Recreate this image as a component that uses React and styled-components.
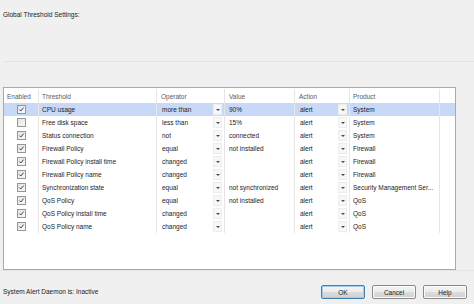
import React from "react";
import styled, { createGlobalStyle } from "styled-components";

const Global = createGlobalStyle`
  html, body { margin: 0; padding: 0; background: #f0f0f0; }
  body { font-family: "Liberation Sans", Arial, sans-serif; }
`;

const COLS = "35px 118px 68px 70px 55px 90px 1fr";

const Page = styled.div`
  width: 474px;
  height: 304px;
  background: #f0f0f0;
  display: flex;
  flex-direction: column;
  font-size: 6.5px;
  color: #1b1b1b;
  overflow: hidden;
`;

const Title = styled.div`
  height: 30px;
  line-height: 30px;
  padding-left: 3px;
`;

const Group = styled.div`
  margin-top: 31px;
  margin-left: 3px;
  padding-top: 25px;
  border-top: 1px solid #e3e3e3;
`;

const TableBox = styled.div`
  width: 451px;
  height: 181px;
  background: #ffffff;
  border: 1px solid #a9a9a9;
`;

const Row = styled.div`
  display: grid;
  grid-template-columns: ${COLS};
  height: ${(p) => (p.$header ? 15 : 13)}px;
  padding-top: ${(p) => (p.$header ? 1 : 0)}px;
  box-sizing: border-box;
  background: ${(p) => (p.$selected ? "#c7d9f7" : "#ffffff")};
  color: ${(p) => (p.$header ? "#5a5a5a" : "#1b1b1b")};
`;

const Cell = styled.div`
  display: flex;
  align-items: center;
  justify-content: ${(p) => (p.$center ? "center" : "flex-start")};
  padding-left: ${(p) => p.$pad ?? 3}px;
  border-right: ${(p) => (p.$last ? "none" : "1px solid #e6e6e6")};
  white-space: nowrap;
  overflow: hidden;
  min-width: 0;
`;

const CellText = styled.span`
  flex: 1;
  min-width: 0;
`;

const DropBtn = styled.span`
  flex: none;
  width: 9px;
  height: 11px;
  margin-right: 2px;
  display: flex;
  align-items: center;
  justify-content: center;
  background: #f7f7f7;
  border: 1px solid #ededed;
  box-sizing: border-box;
`;

const Arrow = styled.span`
  width: 0;
  height: 0;
  border-left: 2px solid transparent;
  border-right: 2px solid transparent;
  border-top: 2px solid #4a4a4a;
`;

const Box = styled.span`
  width: 9px;
  height: 9px;
  box-sizing: border-box;
  border: 1px solid #969696;
  background: linear-gradient(135deg, #e2e2e2, #fafafa);
  display: flex;
  align-items: center;
  justify-content: center;
`;

const Footer = styled.div`
  flex: 1;
  display: flex;
  align-items: flex-start;
  padding: 14px 7px 0 3px;
  border-top: 1px solid #e4e4e4;
`;

const Status = styled.div`
  flex: 1;
  line-height: 14px;
`;

const Buttons = styled.div`
  display: flex;
  gap: 7px;
`;

const Button = styled.button`
  width: 44px;
  height: 14px;
  padding: 0;
  font-family: inherit;
  font-size: 6.5px;
  color: #1b1b1b;
  border: 1px solid ${(p) => (p.$default ? "#3c7fb1" : "#8a8a8a")};
  border-radius: 2px;
  background: linear-gradient(#f4f4f4 0%, #ebebeb 50%, #dddddd 51%, #cfcfcf 100%);
  box-shadow: ${(p) => (p.$default ? "inset 0 0 0 1px #9fd0ef" : "inset 0 0 0 1px #fbfbfb")};
`;

const Check = ({ on }) => (
  <Box>
    {on && (
      <svg width="7" height="7" viewBox="0 0 7 7">
        <path d="M1.4 3.6 L2.8 5 L5.6 1.6" fill="none" stroke="#34405a" strokeWidth="1" />
      </svg>
    )}
  </Box>
);

const rows = [
  { on: true, name: "CPU usage", op: "more than", val: "90%", prod: "System", sel: true },
  { on: false, name: "Free disk space", op: "less than", val: "15%", prod: "System" },
  { on: true, name: "Status connection", op: "not", val: "connected", prod: "System" },
  { on: true, name: "Firewall Policy", op: "equal", val: "not installed", prod: "Firewall" },
  { on: true, name: "Firewall Policy install time", op: "changed", val: "", prod: "Firewall" },
  { on: true, name: "Firewall Policy name", op: "changed", val: "", prod: "Firewall" },
  { on: true, name: "Synchronization state", op: "equal", val: "not synchronized", prod: "Security Management Ser..." },
  { on: true, name: "QoS Policy", op: "equal", val: "not installed", prod: "QoS" },
  { on: true, name: "QoS Policy install time", op: "changed", val: "", prod: "QoS" },
  { on: true, name: "QoS Policy name", op: "changed", val: "", prod: "QoS" },
];

export default function App() {
  return (
    <Page>
      <Global />
      <Title>Global Threshold Settings:</Title>
      <Group>
        <TableBox>
          <Row $header>
            <Cell $pad={3}>Enabled</Cell>
            <Cell>Threshold</Cell>
            <Cell $pad={4}>Operator</Cell>
            <Cell $pad={4}>Value</Cell>
            <Cell $pad={4}>Action</Cell>
            <Cell>Product</Cell>
            <Cell $last />
          </Row>
          {rows.map((r) => (
            <Row key={r.name} $selected={r.sel}>
              <Cell $center $pad={0}>
                <Check on={r.on} />
              </Cell>
              <Cell>
                <CellText>{r.name}</CellText>
              </Cell>
              <Cell $pad={5}>
                <CellText>{r.op}</CellText>
                <DropBtn>
                  <Arrow />
                </DropBtn>
              </Cell>
              <Cell $pad={4}>
                <CellText>{r.val}</CellText>
              </Cell>
              <Cell $pad={5}>
                <CellText>alert</CellText>
                <DropBtn>
                  <Arrow />
                </DropBtn>
              </Cell>
              <Cell>
                <CellText>{r.prod}</CellText>
              </Cell>
              <Cell $last />
            </Row>
          ))}
        </TableBox>
      </Group>
      <Footer>
        <Status>System Alert Daemon is: Inactive</Status>
        <Buttons>
          <Button $default>OK</Button>
          <Button>Cancel</Button>
          <Button>Help</Button>
        </Buttons>
      </Footer>
    </Page>
  );
}
